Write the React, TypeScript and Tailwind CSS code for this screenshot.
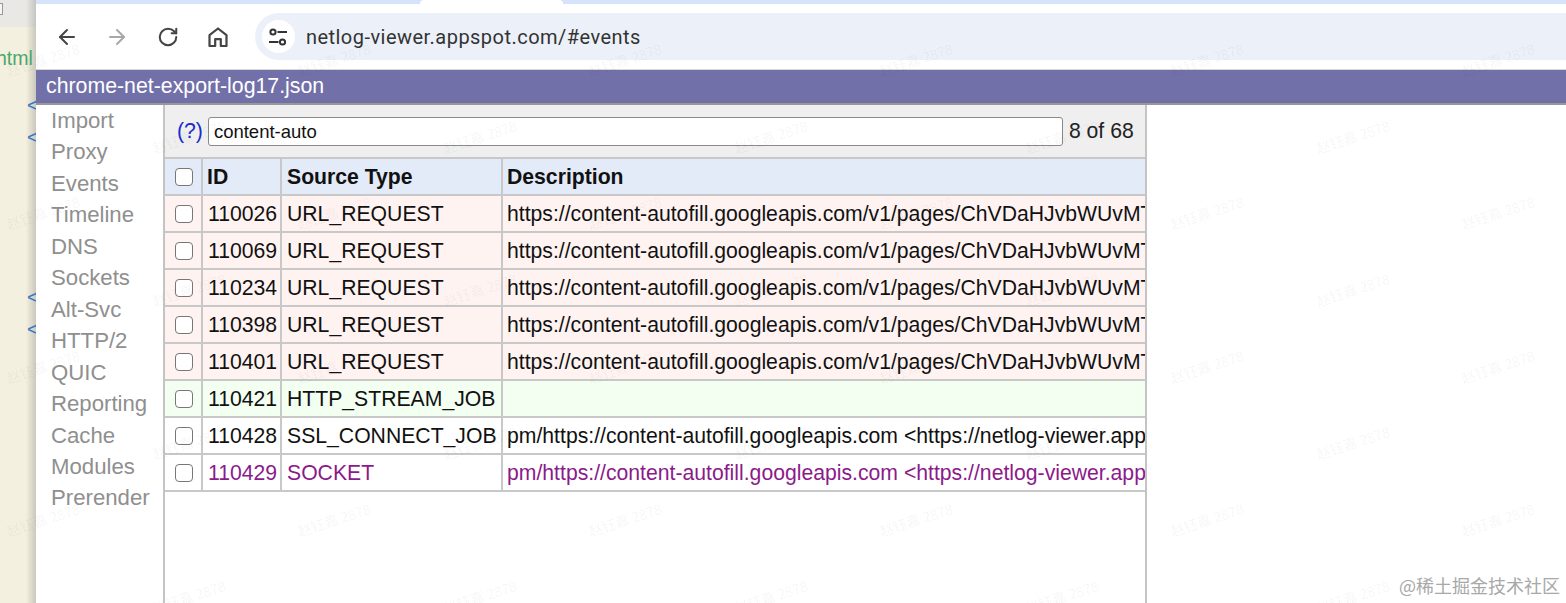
import { ArrowLeft, ArrowRight, RotateCw } from "lucide-react";

const navItems = ["Import", "Proxy", "Events", "Timeline", "DNS", "Sockets", "Alt-Svc", "HTTP/2", "QUIC", "Reporting", "Cache", "Modules", "Prerender"];

const autofillUrl = "https://content-autofill.googleapis.com/v1/pages/ChVDaHJvbWUvMTM1LjAuNzA0OS45NRIQ";
const jobUrl = "pm/https://content-autofill.googleapis.com <https://netlog-viewer.appspot.com/#events>";

const rows = [
  { id: "110026", type: "URL_REQUEST", desc: autofillUrl, tone: "bg-[#fff3f1] text-[#111]" },
  { id: "110069", type: "URL_REQUEST", desc: autofillUrl, tone: "bg-[#fff3f1] text-[#111]" },
  { id: "110234", type: "URL_REQUEST", desc: autofillUrl, tone: "bg-[#fff3f1] text-[#111]" },
  { id: "110398", type: "URL_REQUEST", desc: autofillUrl, tone: "bg-[#fff3f1] text-[#111]" },
  { id: "110401", type: "URL_REQUEST", desc: autofillUrl, tone: "bg-[#fff3f1] text-[#111]" },
  { id: "110421", type: "HTTP_STREAM_JOB", desc: "", tone: "bg-[#f2fff1] text-[#111]" },
  { id: "110428", type: "SSL_CONNECT_JOB", desc: jobUrl, tone: "bg-white text-[#111]" },
  { id: "110429", type: "SOCKET", desc: jobUrl, tone: "bg-white text-[#8b1a8b]" },
];

// faint staggered watermark lattice
const marks: { x: number; y: number }[] = [];
[60, 137, 213, 290, 367, 443, 520, 597].forEach((y, i) => {
  for (let k = 0; k < 6; k++) {
    marks.push({ x: (i % 2 === 0 ? 43 : 189) + k * 291, y });
  }
});

const Box = () => (
  <span className="block w-[18px] h-[18px] ml-[10px] rounded-[4px] border border-[#777] bg-white" />
);

const HomeIcon = () => (
  <svg width="24" height="24" viewBox="0 0 24 24" fill="none" stroke="#444" strokeWidth="2.2" strokeLinejoin="round">
    <path d="M3.5 10.2 12 3.5l8.5 6.7V21h-5.7v-6.8H9.2V21H3.5z" />
  </svg>
);

const TuneIcon = () => (
  <svg width="20" height="20" viewBox="0 0 20 20" fill="none" stroke="#333" strokeWidth="2">
    <circle cx="5" cy="5" r="2.6" />
    <path d="M9.5 5H19" />
    <circle cx="14.5" cy="15" r="2.6" />
    <path d="M1 15h9.5" />
  </svg>
);

export default function App() {
  return (
    <div className="relative flex w-[1566px] h-[603px] overflow-hidden bg-white font-['Liberation_Sans',Arial,sans-serif]">
      <div className="w-[36px] shrink-0 overflow-hidden bg-linear-to-r from-[#f4f0df] from-[72%] to-[#c9c8bc] flex flex-col items-end">
        <div className="w-full h-[27px] bg-linear-to-r from-[#e9e8e4] from-[72%] to-[#c4c4c0] pt-[3px]">
          <div className="w-[3px] h-[12px] bg-[#f4f4f2] border border-[#999] border-l-0" />
        </div>
        <div className="mt-[19px] self-start -ml-[4px] text-[#4aa86c] text-[19.5px] leading-[24px] whitespace-nowrap">html</div>
        <div className="mt-[23px] w-[9px] text-[#3a76c4] text-[20px] leading-[24px]">&lt;</div>
        <div className="mt-[8px] w-[9px] text-[#3a76c4] text-[20px] leading-[24px]">&lt;</div>
        <div className="mt-[136px] w-[9px] text-[#3a76c4] text-[20px] leading-[24px]">&lt;</div>
        <div className="mt-[8px] w-[9px] text-[#3a76c4] text-[20px] leading-[24px]">&lt;</div>
      </div>

      <div className="flex-1 min-w-0 flex flex-col">
        <div className="h-[4px] flex bg-[#d5e3fb]">
          <div className="ml-[384px] w-[143px] bg-white rounded-t-[4px]" />
        </div>
        <div className="h-[66px] bg-white rounded-tl-[12px] border-b border-[#d8d8d8] flex items-center pl-[19px]">
          <div className="flex items-center gap-[26.3px] text-[#444]">
            <ArrowLeft size={24} strokeWidth={2} />
            <ArrowRight size={24} strokeWidth={2} className="text-[#a8a8a8]" />
            <RotateCw size={22} strokeWidth={2.2} className="mx-px" />
            <HomeIcon />
          </div>
          <div className="ml-[25px] flex-1 h-[47px] bg-[#ecf0f8] rounded-l-full flex items-center pl-[7px]">
            <div className="w-[33px] h-[33px] rounded-full bg-white flex items-center justify-center">
              <TuneIcon />
            </div>
            <span className="ml-[11px] font-['Roboto',sans-serif] text-[20px] tracking-[0.47px] text-[#333]">netlog-viewer.appspot.com/#events</span>
          </div>
        </div>
        <div className="h-[35px] bg-[#7270a8] border-b-2 border-[#989898] pl-[10px] text-white text-[21.3px] leading-[33px]">chrome-net-export-log17.json</div>

        <div className="flex-1 min-h-0 flex">
          <nav className="w-[127px] pl-[15px] text-[#8f8f8f] text-[22.2px] leading-[31.45px]">
            {navItems.map((item) => (
              <div key={item}>{item}</div>
            ))}
          </nav>
          <main className="w-[984px] border-x-2 border-[#c4c4c4] overflow-hidden">
            <div className="h-[52px] bg-[#efefef] flex items-center pl-[12px] text-[21.2px]">
              <span className="text-[#1a2bd0]">(?)</span>
              <div className="ml-[5px] w-[855px] h-[29px] bg-white border border-[#8a8a8a] rounded-[3px] pl-[5px] leading-[27px] text-[18.5px] text-[#111]">content-auto</div>
              <span className="ml-[6px] text-[#222]">8 of 68</span>
            </div>
            <table className="w-[982px] table-fixed border-collapse text-[21.2px]">
              <colgroup>
                <col className="w-[37px]" />
                <col className="w-[79px]" />
                <col className="w-[221px]" />
                <col />
              </colgroup>
              <thead>
                <tr className="h-[37px] bg-[#e3eaf8] text-left text-[#111]">
                  <th className="border-y-2 border-r-2 border-[#c8c8c8]"><Box /></th>
                  <th className="border-y-2 border-r-2 border-[#c8c8c8] pl-[4px] font-bold">ID</th>
                  <th className="border-y-2 border-r-2 border-[#c8c8c8] pl-[5px] font-bold">Source Type</th>
                  <th className="border-y-2 border-[#c8c8c8] pl-[4px] font-bold">Description</th>
                </tr>
              </thead>
              <tbody>
                {rows.map((row) => (
                  <tr key={row.id} className={`h-[37px] ${row.tone}`}>
                    <td className="border-b-2 border-r-2 border-[#c8c8c8]"><Box /></td>
                    <td className="border-b-2 border-r-2 border-[#c8c8c8] pl-[5px] whitespace-nowrap overflow-hidden">{row.id}</td>
                    <td className="border-b-2 border-r-2 border-[#c8c8c8] pl-[5px] whitespace-nowrap overflow-hidden">{row.type}</td>
                    <td className="border-b-2 border-[#c8c8c8] pl-[4px] whitespace-nowrap overflow-hidden">{row.desc}</td>
                  </tr>
                ))}
              </tbody>
            </table>
          </main>
        </div>
      </div>

      {marks.map((m) => (
        <span
          key={`${m.x}-${m.y}`}
          className="absolute pointer-events-none -rotate-[18deg] whitespace-nowrap text-[14px] text-black/[0.05] font-['Noto_Sans_CJK_SC',sans-serif] -translate-x-1/2 -translate-y-1/2"
          style={{ left: m.x, top: m.y }}
        >
          赵钰嘉 2878
        </span>
      ))}
      <span className="absolute right-[6px] bottom-[8px] text-[18px] leading-[20px] text-[#a8a8a8] font-['Noto_Sans_CJK_SC',sans-serif]">@稀土掘金技术社区</span>
    </div>
  );
}
